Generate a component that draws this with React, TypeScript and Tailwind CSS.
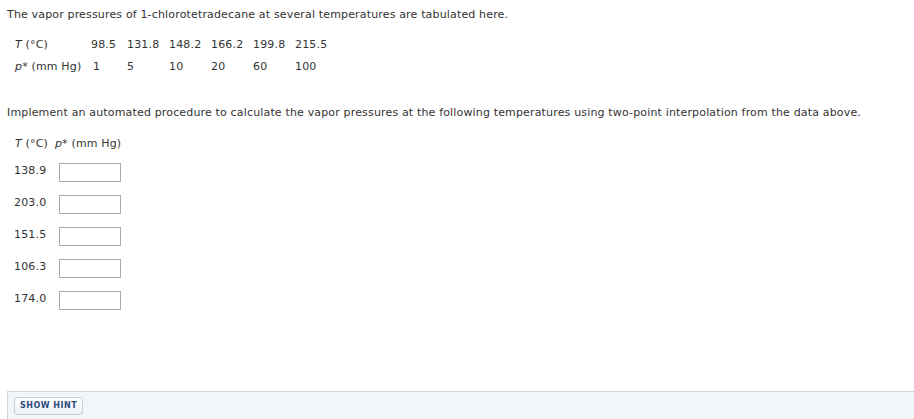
const DATA_T = ["98.5", "131.8", "148.2", "166.2", "199.8", "215.5"];
const DATA_P = ["1", "5", "10", "20", "60", "100"];
const COL_W = ["w-[36px]", "w-[42px]", "w-[42px]", "w-[42px]", "w-[42px]", "w-[42px]"];
const TEMPS = ["138.9", "203.0", "151.5", "106.3", "174.0"];

export default function App() {
  return (
    <div
      className="w-[914px] h-[419px] bg-white text-[11px] tracking-[0.16px] text-[#333] overflow-hidden flex flex-col"
      style={{ fontFamily: "Verdana, 'DejaVu Sans', sans-serif" }}
    >
      <div className="px-[7px] pt-[8px] flex-1">
        <p className="leading-[14px]">
          The vapor pressures of 1-chlorotetradecane at several temperatures are tabulated here.
        </p>

        <table className="mt-[12px] ml-[8px] border-collapse">
          <tbody>
            <tr className="h-[22px]">
              <td className="w-[76px] p-0">
                <i>T</i> (°C)
              </td>
              {DATA_T.map((t, i) => (
                <td key={t} className={`${COL_W[i]} p-0`}>{t}</td>
              ))}
            </tr>
            <tr className="h-[22px]">
              <td className="p-0">
                <i>p</i>* (mm Hg)
              </td>
              {DATA_P.map((p, i) => (
                <td key={p} className={`p-0 ${i === 0 ? "pl-[2px]" : ""}`}>{p}</td>
              ))}
            </tr>
          </tbody>
        </table>

        <p className="mt-[28px] leading-[14px]">
          Implement an automated procedure to calculate the vapor pressures at the following temperatures using
          two-point interpolation from the data above.
        </p>

        <div className="ml-[8px] mt-[17px] flex gap-[7px] leading-[14px]">
          <span>
            <i>T</i> (°C)
          </span>
          <span>
            <i>p</i>* (mm Hg)
          </span>
        </div>

        <div className="ml-[7px] mt-[13px] flex flex-col gap-[14px]">
          {TEMPS.map((t) => (
            <div key={t} className="flex items-start h-[18px]">
              <span className="w-[45px] leading-[14px]">{t}</span>
              <input
                type="text"
                className="w-[62px] h-[19px] border border-[#a9a9a9] bg-white mt-[-1px]"
              />
            </div>
          ))}
        </div>
      </div>

      <div className="ml-[7px] h-[28px] bg-[#f3f6f9] border-t border-l border-[#cfd3dc] flex items-center pl-[6px]">
        <button className="h-[18px] px-[5px] rounded-[3px] border border-[#c9ced8] bg-gradient-to-b from-white to-[#eef1f5] text-[8px] font-bold tracking-[0.5px] text-[#2b4a7e]">
          SHOW HINT
        </button>
      </div>
    </div>
  );
}
